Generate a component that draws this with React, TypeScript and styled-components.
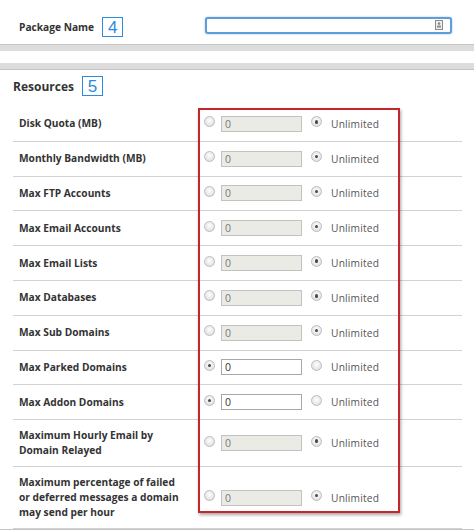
import React from 'react';
import styled, { createGlobalStyle } from 'styled-components';

const GlobalStyle = createGlobalStyle`
  html, body {
    margin: 0;
    padding: 0;
    background: #ffffff;
  }
  body {
    font-family: 'Open Sans', 'Liberation Sans', Arial, sans-serif;
    color: #333333;
  }
`;

const Page = styled.div`
  width: 474px;
  overflow: hidden;
`;

const PackagePanel = styled.div`
  display: flex;
  align-items: flex-start;
  height: 45px;
  box-sizing: border-box;
  padding: 17px 0 0 19px;
  border-bottom: 1px solid #c4c4c4;
`;

const LabelWithBadge = styled.div<{ $width: number }>`
  display: flex;
  align-items: center;
  gap: 8px;
  width: ${(p) => p.$width}px;
  flex-shrink: 0;
`;

const FieldLabel = styled.span`
  font-size: 10.2px;
  font-weight: 700;
  color: #333333;
`;

const Title = styled.h2`
  margin: 0;
  font-size: 12px;
  font-weight: 700;
  color: #333333;
`;

const StepBadge = styled.span`
  display: inline-flex;
  align-items: center;
  justify-content: center;
  width: 21px;
  height: 20px;
  box-sizing: border-box;
  border: 1.5px solid #2b8be0;
  color: #2b8be0;
  font-family: 'Liberation Sans', Arial, sans-serif;
  font-size: 17px;
  line-height: 1;
`;

const NameInputWrap = styled.div`
  position: relative;
  width: 247px;
  height: 17px;
`;

const NameInput = styled.input`
  display: block;
  width: 100%;
  height: 100%;
  box-sizing: border-box;
  border: 2px solid #5e9ed8;
  border-radius: 3px;
  box-shadow: 0 0 2px rgba(70, 140, 210, 0.6);
  outline: none;
  padding: 0 16px 0 4px;
  font-family: inherit;
  font-size: 11px;
  background: #ffffff;
`;

const AutofillIcon = styled.svg`
  position: absolute;
  right: 9px;
  top: 3px;
`;

const Band = styled.div<{ $lineTop?: boolean; $lineBottom?: boolean }>`
  height: 6px;
  background: #dddddd;
  border-top: ${(p) => (p.$lineTop ? '1px solid #c4c4c4' : 'none')};
  border-bottom: ${(p) => (p.$lineBottom ? '1px solid #c4c4c4' : 'none')};
`;

const Gap = styled.div`
  height: 12px;
`;

const ResourcesPanel = styled.div`
  padding: 6px 12px 0 13px;
`;

const PanelHeader = styled.div`
  display: flex;
  align-items: center;
  gap: 8px;
  height: 20px;
  margin-bottom: 11px;
`;

const Table = styled.div`
  position: relative;
  width: 449px;
`;

const Row = styled.div`
  display: flex;
  align-items: center;
  min-height: 34.8px;
  box-sizing: border-box;
  padding: 8px 0;
  border-bottom: 1px solid #d2d2d2;

  &:last-of-type {
    border-bottom: none;
  }
`;

const RowLabel = styled.div`
  width: 186px;
  flex-shrink: 0;
  box-sizing: border-box;
  padding: 0 12px 0 6px;
  font-size: 10.2px;
  font-weight: 700;
  line-height: 15px;
  color: #333333;
`;

const Controls = styled.div`
  display: flex;
  align-items: center;
  padding-left: 5px;
`;

const Radio = styled.input.attrs({ type: 'radio' })`
  appearance: none;
  -webkit-appearance: none;
  margin: 0 0 4px 0;
  width: 11px;
  height: 11px;
  border-radius: 50%;
  border: 1px solid #bdbdbd;
  background: radial-gradient(circle at 50% 40%, #fdfdfd 0%, #e6e6e6 65%, #d2d2d2 100%);
  box-sizing: border-box;
  position: relative;
  flex-shrink: 0;

  &:checked::after {
    content: '';
    position: absolute;
    left: 2.75px;
    top: 2.75px;
    width: 3.5px;
    height: 3.5px;
    border-radius: 50%;
    background: #484848;
  }
`;

const ValueInput = styled.input<{ $enabled: boolean }>`
  width: 81px;
  height: 16px;
  box-sizing: border-box;
  margin: 0 9px 0 6px;
  padding: 0 3px;
  border: 1px solid ${(p) => (p.$enabled ? '#a8a8a8' : '#c2c2c2')};
  background: ${(p) => (p.$enabled ? '#ffffff' : '#ebebe6')};
  color: ${(p) => (p.$enabled ? '#333333' : '#777777')};
  font-family: inherit;
  font-size: 10.5px;
  outline: none;
`;

const UnlimitedLabel = styled.label`
  margin-left: 9px;
  font-size: 10.2px;
  color: #555555;
  letter-spacing: 0.2px;
`;

const Annotation = styled.div`
  position: absolute;
  left: 185px;
  top: 1px;
  width: 202px;
  height: 405px;
  box-sizing: border-box;
  border: 2px solid #c4262c;
  box-shadow: 1px 2px 3px rgba(0, 0, 0, 0.35);
  pointer-events: none;
`;

interface Resource {
  id: string;
  label: string;
  limited: boolean;
}

const resources: Resource[] = [
  { id: 'quota', label: 'Disk Quota (MB)', limited: false },
  { id: 'bwlimit', label: 'Monthly Bandwidth (MB)', limited: false },
  { id: 'maxftp', label: 'Max FTP Accounts', limited: false },
  { id: 'maxpop', label: 'Max Email Accounts', limited: false },
  { id: 'maxlst', label: 'Max Email Lists', limited: false },
  { id: 'maxsql', label: 'Max Databases', limited: false },
  { id: 'maxsub', label: 'Max Sub Domains', limited: false },
  { id: 'maxpark', label: 'Max Parked Domains', limited: true },
  { id: 'maxaddon', label: 'Max Addon Domains', limited: true },
  { id: 'maxemailhr', label: 'Maximum Hourly Email by Domain Relayed', limited: false },
  {
    id: 'maxdefer',
    label: 'Maximum percentage of failed or deferred messages a domain may send per hour',
    limited: false,
  },
];

export default function App() {
  return (
    <Page>
      <GlobalStyle />
      <PackagePanel>
        <LabelWithBadge $width={186}>
          <FieldLabel>Package Name</FieldLabel>
          <StepBadge>4</StepBadge>
        </LabelWithBadge>
        <NameInputWrap>
          <NameInput type="text" />
          <AutofillIcon width="8" height="10" viewBox="0 0 8 10">
            <rect x="0.5" y="0.5" width="7" height="9" fill="#f1f1f1" stroke="#8a8a8a" />
            <circle cx="4" cy="3.6" r="1.3" fill="#8a8a8a" />
            <rect x="2" y="5.6" width="4" height="2" fill="#8a8a8a" />
          </AutofillIcon>
        </NameInputWrap>
      </PackagePanel>
      <Band />
      <Gap />
      <Band $lineBottom />
      <ResourcesPanel>
        <PanelHeader>
          <Title>Resources</Title>
          <StepBadge>5</StepBadge>
        </PanelHeader>
        <Table>
          {resources.map((r) => (
            <Row key={r.id}>
              <RowLabel>{r.label}</RowLabel>
              <Controls>
                <Radio name={r.id} defaultChecked={r.limited} />
                <ValueInput
                  type="text"
                  $enabled={r.limited}
                  disabled={!r.limited}
                  defaultValue="0"
                />
                <Radio name={r.id} id={`${r.id}_unl`} defaultChecked={!r.limited} />
                <UnlimitedLabel htmlFor={`${r.id}_unl`}>Unlimited</UnlimitedLabel>
              </Controls>
            </Row>
          ))}
          <Annotation />
        </Table>
      </ResourcesPanel>
      <Band $lineTop />
    </Page>
  );
}
